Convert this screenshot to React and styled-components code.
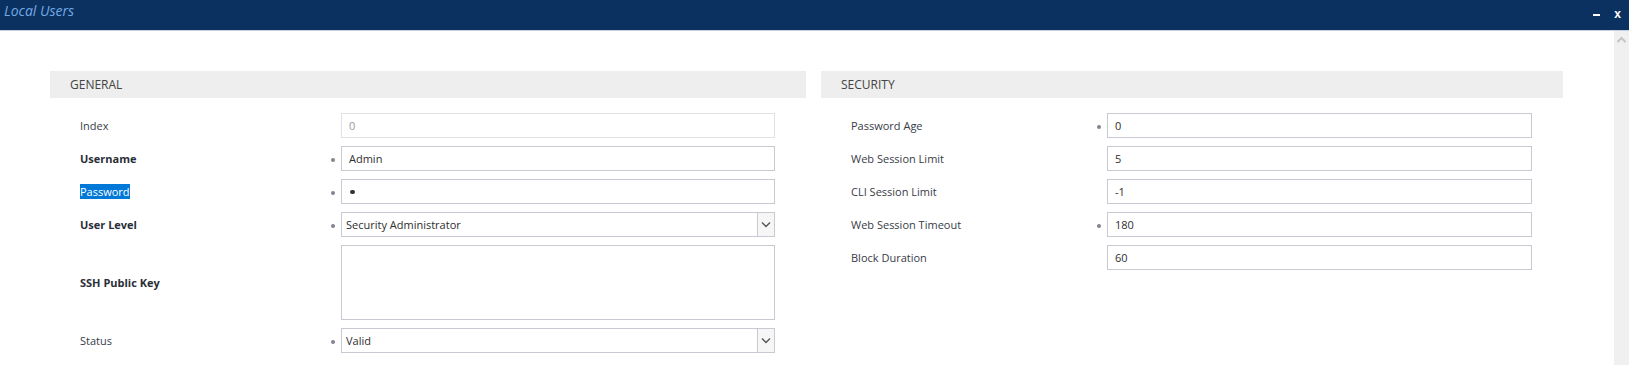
import React from "react";
import styled, { createGlobalStyle } from "styled-components";

const Global = createGlobalStyle`
  html, body { margin: 0; padding: 0; background: #fff; }
  body { font-family: "Open Sans", "Noto Sans", Arial, sans-serif; font-size: 11px; color: #333; }
  * { box-sizing: border-box; }
`;

const Window = styled.div`
  width: 1629px;
  height: 365px;
  display: flex;
  flex-direction: column;
  overflow: hidden;
`;

const TitleBar = styled.div`
  height: 31px;
  flex: none;
  background: #0a3160;
  border-bottom: 1px solid #c9d1db;
  display: flex;
  align-items: flex-start;
  padding: 2px 0 0 4px;
`;

const Title = styled.div`
  font-style: italic;
  font-size: 14px;
  line-height: 18px;
  color: #74aae6;
  flex: 1;
`;

const WinButtons = styled.div`
  display: flex;
  align-items: center;
  gap: 14px;
  padding-right: 8px;
  height: 22px;
`;

const WinBtn = styled.span`
  color: #fff;
  font-size: 12px;
  font-weight: 700;
  line-height: 1;
  font-family: "Liberation Sans", Arial, sans-serif;
  margin-top: 1px;
`;

const MinusBar = styled.span`
  display: inline-block;
  width: 7px;
  height: 2px;
  background: #fff;
  margin-top: 4px;
`;

const Body = styled.div`
  flex: 1;
  display: flex;
`;

const Content = styled.div`
  flex: 1;
  padding: 40px 0 0 50px;
  display: flex;
  gap: 15px;
  align-items: flex-start;
`;

const Scrollbar = styled.div`
  width: 15px;
  flex: none;
  background: #f0f0f0;
  display: flex;
  justify-content: center;
  padding-top: 6px;
`;

const Section = styled.div`
  width: ${(p) => p.$w}px;
  display: flex;
  flex-direction: column;
`;

const SectionHeader = styled.div`
  height: 27px;
  background: #eeeeee;
  display: flex;
  align-items: center;
  padding-left: 20px;
  font-size: 12px;
  color: #444;
`;

const Rows = styled.div`
  display: flex;
  flex-direction: column;
  gap: 8px;
  padding: 15px ${(p) => p.$pr}px 0 30px;
`;

const Row = styled.div`
  display: grid;
  grid-template-columns: ${(p) => p.$label}px 1fr;
  align-items: center;
  height: ${(p) => p.$h || 25}px;
`;

const Label = styled.div`
  font-weight: ${(p) => (p.$bold ? 700 : 400)};
  color: ${(p) => (p.$bold ? "#2a2e38" : "#373c47")};
  position: relative;
  height: 100%;
  display: flex;
  align-items: center;
`;

const Selected = styled.span`
  background: #0078d7;
  color: #fff;
  line-height: 15px;
`;

const Dot = styled.span`
  position: absolute;
  right: 6px;
  top: 50%;
  width: 4px;
  height: 4px;
  margin-top: -1px;
  border-radius: 50%;
  background: #7f848e;
`;

const Field = styled.div`
  height: 100%;
  border: 1px solid ${(p) => (p.$disabled ? "#e1e2e5" : "#c7cad1")};
  background: #fff;
  display: flex;
  align-items: ${(p) => (p.$area ? "flex-start" : "center")};
  padding-left: 7px;
  color: ${(p) => (p.$disabled ? "#9a9ca2" : "#2e2e2e")};
  font-size: 11px;
`;

const SelectBox = styled(Field)`
  padding-right: 0;
  justify-content: space-between;
  padding-left: 4px;
`;

const ArrowBox = styled.div`
  width: 17px;
  height: 100%;
  border-left: 1px solid #c7cad1;
  display: flex;
  align-items: center;
  justify-content: center;
  background: #f6f6f6;
`;

const PwDot = styled.span`
  display: inline-block;
  width: 4.5px;
  height: 4.5px;
  border-radius: 50%;
  background: #333;
  margin-left: 1px;
  margin-top: 1px;
`;

const Chevron = () => (
  <svg width="10" height="7" viewBox="0 0 10 7">
    <path d="M1 1.5 L5 5.5 L9 1.5" fill="none" stroke="#555" strokeWidth="1.4" />
  </svg>
);

const Input = ({ children, disabled }) => <Field $disabled={disabled}>{children}</Field>;

const Select = ({ children }) => (
  <SelectBox>
    <span>{children}</span>
    <ArrowBox>
      <Chevron />
    </ArrowBox>
  </SelectBox>
);

const FormRow = ({ label, bold, dot, children, h, labelW }) => (
  <Row $label={labelW} $h={h}>
    <Label $bold={bold}>
      {label}
      {dot && <Dot />}
    </Label>
    {children}
  </Row>
);

export default function App() {
  return (
    <>
      <Global />
      <Window>
        <TitleBar>
          <Title>Local Users</Title>
          <WinButtons>
            <MinusBar />
            <WinBtn>x</WinBtn>
          </WinButtons>
        </TitleBar>
        <Body>
          <Content>
            <Section $w={756}>
              <SectionHeader>GENERAL</SectionHeader>
              <Rows $pr={31}>
                <FormRow label="Index" labelW={261}>
                  <Input disabled>0</Input>
                </FormRow>
                <FormRow label="Username" bold dot labelW={261}>
                  <Input>Admin</Input>
                </FormRow>
                <FormRow label={<Selected>Password</Selected>} dot labelW={261}>
                  <Input>
                    <PwDot />
                  </Input>
                </FormRow>
                <FormRow label="User Level" bold dot labelW={261}>
                  <Select>Security Administrator</Select>
                </FormRow>
                <FormRow label="SSH Public Key" bold labelW={261} h={75}>
                  <Field $area />
                </FormRow>
                <FormRow label="Status" dot labelW={261}>
                  <Select>Valid</Select>
                </FormRow>
              </Rows>
            </Section>
            <Section $w={742}>
              <SectionHeader>SECURITY</SectionHeader>
              <Rows $pr={31}>
                <FormRow label="Password Age" dot labelW={256}>
                  <Input>0</Input>
                </FormRow>
                <FormRow label="Web Session Limit" labelW={256}>
                  <Input>5</Input>
                </FormRow>
                <FormRow label="CLI Session Limit" labelW={256}>
                  <Input>-1</Input>
                </FormRow>
                <FormRow label="Web Session Timeout" dot labelW={256}>
                  <Input>180</Input>
                </FormRow>
                <FormRow label="Block Duration" labelW={256}>
                  <Input>60</Input>
                </FormRow>
              </Rows>
            </Section>
          </Content>
          <Scrollbar>
            <svg width="9" height="6" viewBox="0 0 9 6">
              <path d="M0.5 5 L4.5 1 L8.5 5" fill="none" stroke="#c4c4c4" strokeWidth="2" />
            </svg>
          </Scrollbar>
        </Body>
      </Window>
    </>
  );
}
